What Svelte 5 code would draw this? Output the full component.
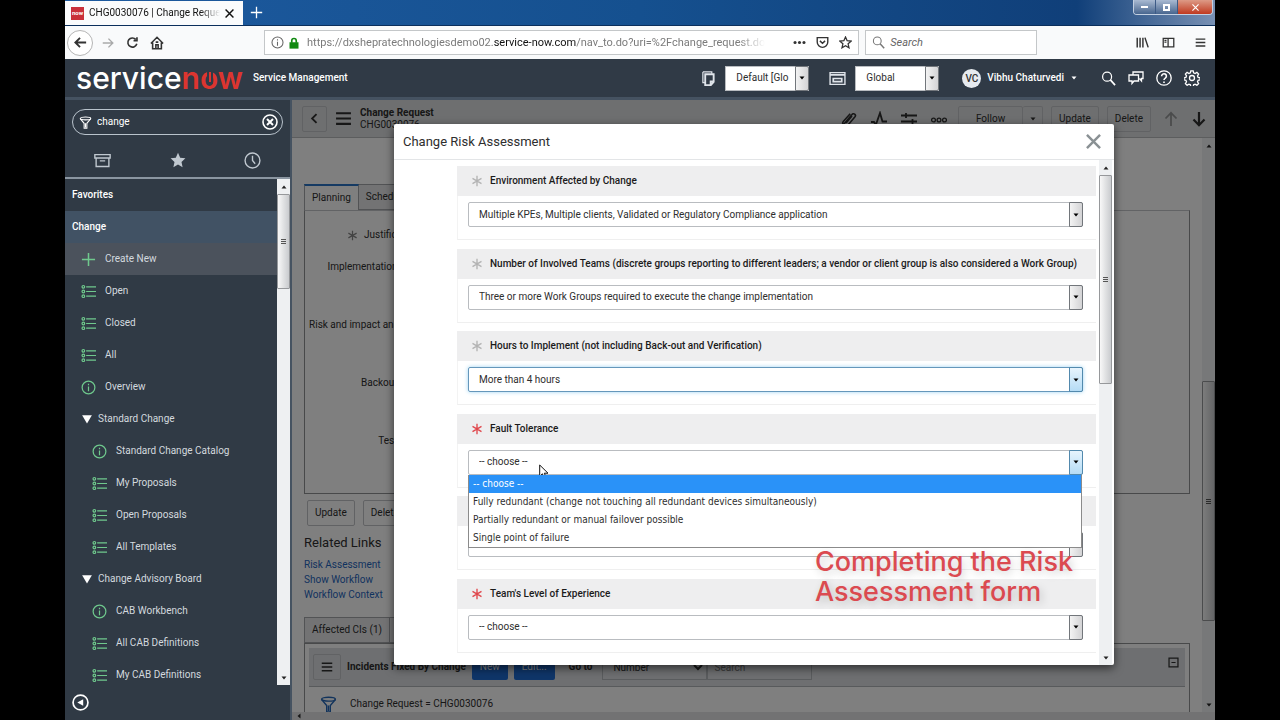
<script lang="ts">
	type Question = {
		id: string;
		label: string;
		value: string;
		required?: boolean;
		focused?: boolean;
		open?: boolean;
	};

	type NavItem = { label: string; icon: string; level: string };

	const questions: Question[] = [
		{
			id: 'environment',
			label: 'Environment Affected by Change',
			value: 'Multiple KPEs, Multiple clients, Validated or Regulatory Compliance application'
		},
		{
			id: 'teams',
			label:
				'Number of Involved Teams (discrete groups reporting to different leaders; a vendor or client group is also considered a Work Group)',
			value: 'Three or more Work Groups required to execute the change implementation'
		},
		{
			id: 'hours',
			label: 'Hours to Implement (not including Back-out and Verification)',
			value: 'More than 4 hours',
			focused: true
		},
		{ id: 'fault', label: 'Fault Tolerance', value: '-- choose --', required: true, open: true },
		{ id: 'next', label: '', value: '-- choose --', required: true },
		{ id: 'experience', label: "Team's Level of Experience", value: '-- choose --', required: true }
	];

	const faultOptions = [
		'-- choose --',
		'Fully redundant (change not touching all redundant devices simultaneously)',
		'Partially redundant or manual failover possible',
		'Single point of failure'
	];

	const nav: NavItem[] = [
		{ label: 'Favorites', icon: '', level: 'app' },
		{ label: 'Change', icon: '', level: 'app current' },
		{ label: 'Create New', icon: 'plus', level: 'module hovered' },
		{ label: 'Open', icon: 'list', level: 'module' },
		{ label: 'Closed', icon: 'list', level: 'module' },
		{ label: 'All', icon: 'list', level: 'module' },
		{ label: 'Overview', icon: 'info', level: 'module' },
		{ label: 'Standard Change', icon: 'triangle', level: 'group' },
		{ label: 'Standard Change Catalog', icon: 'info', level: 'nested' },
		{ label: 'My Proposals', icon: 'list', level: 'nested' },
		{ label: 'Open Proposals', icon: 'list', level: 'nested' },
		{ label: 'All Templates', icon: 'list', level: 'nested' },
		{ label: 'Change Advisory Board', icon: 'triangle', level: 'group' },
		{ label: 'CAB Workbench', icon: 'info', level: 'nested' },
		{ label: 'All CAB Definitions', icon: 'list', level: 'nested' },
		{ label: 'My CAB Definitions', icon: 'list', level: 'nested' }
	];

	const planFields = [
		{ label: 'Justification', starred: true },
		{ label: 'Implementation plan', starred: false },
		{ label: 'Risk and impact analysis', starred: false },
		{ label: 'Backout plan', starred: false },
		{ label: 'Test plan', starred: false }
	];
</script>

{#snippet icon(name: string, size = 16)}
	<svg class="icon" width={size} height={size} viewBox="0 0 16 16" aria-hidden="true">
		{#if name === 'plus'}
			<path d="M8 1v14M1 8h14" stroke-width="1.600" />
		{:else if name === 'list'}
			<path d="M5.5 3H16M5.5 8H16M5.5 13H16" />
			<circle cx="2.5" cy="3" r="1.4" />
			<circle cx="2.5" cy="8" r="1.4" />
			<circle cx="2.5" cy="13" r="1.4" />
		{:else if name === 'info'}
			<circle cx="8" cy="8" r="6.8" />
			<path d="M8 7v5M8 4v1.6" />
		{:else if name === 'triangle'}
			<path class="solid" d="M1.500 3h13L8 14z" />
		{:else if name === 'caret'}
			<path class="solid" d="M3 5h10L8 11z" />
		{:else if name === 'caret-up'}
			<path class="solid" d="M3 11h10L8 5z" />
		{:else if name === 'caret-left'}
			<path class="solid" d="M11 3v10L5 8z" />
		{:else if name === 'funnel'}
			<ellipse cx="8" cy="3" rx="6.500" ry="1.800" />
			<path d="M1.500 3.300 6.300 9v6h3.400V9l4.800-5.700M8 9v5" />
		{:else if name === 'clear'}
			<circle cx="8" cy="8" r="7" stroke-width="1.600" />
			<path d="m5 5 6 6m0-6-6 6" stroke-width="2" />
		{:else if name === 'archive'}
			<path d="M.8 2.500h14.400v3.200H.8zM2 5.700v8h12v-8M5.500 8.300h5" />
		{:else if name === 'star'}
			<path class="solid" d="m8 .8 2.200 4.900 5.200.6-3.900 3.600 1.100 5.300L8 12.500l-4.600 2.700 1.100-5.300L.6 6.300l5.200-.6z" />
		{:else if name === 'star-outline'}
			<path d="m8 1.300 2 4.500 4.900.5-3.700 3.300 1.100 4.900L8 12l-4.300 2.500 1.100-4.900L1.100 6.300 6 5.800z" stroke-width="1.600" />
		{:else if name === 'clock'}
			<circle cx="8" cy="8" r="7" />
			<path d="M8 3.500V8l2.500 3" />
		{:else if name === 'collapse'}
			<circle cx="8" cy="8" r="7" stroke-width="1.600" />
			<path class="solid" d="M10.500 5v6L5 8z" />
		{:else if name === 'back'}
			<path d="M14 8H2.500m5-5-5 5 5 5" stroke-width="2" />
		{:else if name === 'forward'}
			<path d="M2 8h11.500m-5-5 5 5-5 5" stroke-width="1.600" />
		{:else if name === 'reload'}
			<path d="M13.300 9.500A5.600 5.600 0 1 1 12 4.200M13.500 1.500v4.200H9.300" stroke-width="2" />
		{:else if name === 'home'}
			<path d="m1 8.500 7-7 7 7M3 7.500V14.500h10V7.500M6.700 14.500v-4.500h2.600v4.500M6.500 7h3" stroke-width="1.800" />
		{:else if name === 'lock'}
			<path class="solid" d="M2 7h12v8.500H2z" />
			<path d="M5 7.500V5a3 3 0 0 1 6 0v2.500" stroke-width="2.200" />
		{:else if name === 'dots'}
			<circle class="solid" cx="2.500" cy="8" r="1.900" />
			<circle class="solid" cx="8" cy="8" r="1.900" />
			<circle class="solid" cx="13.500" cy="8" r="1.900" />
		{:else if name === 'rings'}
			<circle cx="2.500" cy="9" r="1.900" />
			<circle cx="8" cy="9" r="1.900" />
			<circle cx="13.500" cy="9" r="1.900" />
		{:else if name === 'pocket'}
			<path d="M1.500 2h13v5.500a6.500 6.500 0 0 1-13 0zM4.800 6 8 9l3.200-3" stroke-width="1.700" />
		{:else if name === 'search'}
			<circle cx="6.500" cy="6" r="4.800" />
			<path d="m10 9.500 5 5.500" stroke-width="1.800" />
		{:else if name === 'library'}
			<path d="M1.500 2v12M5 2v12M8.500 2v12M11 2l4 12" stroke-width="1.800" />
		{:else if name === 'sidebar'}
			<path d="M1.500 3h13v10.500h-13zM7.500 3v10.500M3 5.500h2.500M3 7.500h2.500" stroke-width="1.600" />
		{:else if name === 'menu'}
			<path d="M1 3h14M1 8h14M1 13h14" stroke-width="2" />
		{:else if name === 'pages'}
			<path d="M2 1h9.500v2M2 1v11.500h2.500" />
			<path d="M4.500 3.500h9v8L10.500 15h-6zM13.500 11h-3.200v3.800" stroke-width="2" />
		{:else if name === 'window'}
			<path d="M1 2.500h14v11H1z" />
			<path d="M1 4.500h14M4 8h8v3H4z" stroke-width="1.600" />
		{:else if name === 'chat'}
			<path d="M5 4.500V2h10v6.500h-1.500V11L11.500 8.500M1 5h9.500v6H6l-2 2.500V11H1z" />
		{:else if name === 'help'}
			<circle cx="8" cy="8" r="7.200" />
			<path d="M5.600 6.200a2.400 2.400 0 1 1 3.700 2c-.9.6-1.300.9-1.300 1.900M8 11.500v1.500" stroke-width="1.600" />
		{:else if name === 'gear'}
			<path
				d="M6.800.8h2.400l.4 2 1.500.7 1.800-1.100 1.700 1.700-1.100 1.700.6 1.600 2 .4v2l-2 .5-.6 1.500 1.100 1.800-1.700 1.700-1.800-1.100-1.500.6-.4 2H6.800l-.4-2-1.500-.6-1.800 1.100-1.700-1.700 1.100-1.800-.6-1.500-1.900-.5v-2l1.900-.4.6-1.600-1.100-1.700 1.700-1.700 1.800 1.100 1.500-.7z"
			/>
			<circle cx="8" cy="8" r="2.500" />
		{:else if name === 'chevron'}
			<path d="M10.500 2.500 5 8l5.500 5.500" stroke-width="2.200" />
		{:else if name === 'clip'}
			<path d="m3 13 8-9.500a1.800 1.800 0 0 1 3 2.300L7 14a2.900 2.900 0 0 1-4.500-3.700l6.700-7.500M5 12l6-7" stroke-width="1.600" />
		{:else if name === 'activity'}
			<path d="M0 11h3l1.800 3L9 2l2.500 8.500H16" stroke-width="1.800" />
		{:else if name === 'sliders'}
			<path d="M0 4.500h16M0 10.500h16M5 2v5M11.500 8v5" stroke-width="1.800" />
		{:else if name === 'up'}
			<path d="M8 15V2M2.500 7.500 8 1.800l5.500 5.700" stroke-width="1.800" />
		{:else if name === 'down'}
			<path d="M8 1v13M2.500 8.500 8 14.200l5.500-5.700" stroke-width="2.200" />
		{:else if name === 'close'}
			<path d="m1 1 14 14M15 1 1 15" stroke-width="2.600" />
		{:else if name === 'asterisk'}
			<path d="M8 1v14M2 4.500l12 7M14 4.500l-12 7" stroke-width="1.800" />
		{:else if name === 'minus-box'}
			<path d="M1.500 1.500h13v13h-13zM5 8h6" stroke-width="1.800" />
		{/if}
	</svg>
{/snippet}

{#snippet scrollbar(offset: number, length: number)}
	<div class="scrollbar" aria-hidden="true">
		<span class="scroll-arrow">{@render icon('caret-up', 8)}</span>
		<div class="track">
			<div style="height: {offset}%"></div>
			<div class="thumb" style="height: {length}%"><i></i></div>
		</div>
		<span class="scroll-arrow">{@render icon('caret', 8)}</span>
	</div>
{/snippet}

<div class="stage">
	<div class="browser">
		<div class="titlebar">
			<div class="tab">
				<span class="favicon">now</span>
				<span class="tab-title">CHG0030076 | Change Request</span>
				<button class="plain" aria-label="Close tab">{@render icon('close', 9)}</button>
			</div>
			<button class="plain new-tab" aria-label="New tab">{@render icon('plus', 13)}</button>
			<div class="window-buttons">
				<button aria-label="Minimize"><i class="min"></i></button>
				<button aria-label="Restore"><i class="max"></i></button>
				<button class="quit" aria-label="Close window">{@render icon('close', 7)}</button>
			</div>
		</div>

		<div class="toolbar">
			<button class="plain round" aria-label="Back">{@render icon('back', 15)}</button>
			<button class="plain faded" aria-label="Forward">{@render icon('forward', 14)}</button>
			<button class="plain" aria-label="Reload">{@render icon('reload', 13)}</button>
			<button class="plain" aria-label="Home">{@render icon('home', 14)}</button>
			<div class="address">
				<span class="muted">{@render icon('info', 13)}</span>
				<span class="secure">{@render icon('lock', 12)}</span>
				<span class="url"
					>https://dxshepratechnologiesdemo02.<b>service-now.com</b
					>/nav_to.do?uri=%2Fchange_request.do</span
				>
				{@render icon('dots', 13)}
				{@render icon('pocket', 13)}
				{@render icon('star-outline', 13)}
			</div>
			<label class="web-search">
				{@render icon('search', 13)}
				<input type="text" placeholder="Search" aria-label="Search the web" />
			</label>
			<div class="toolbar-end">
				{@render icon('library', 13)}
				{@render icon('sidebar', 13)}
				{@render icon('menu', 11)}
			</div>
		</div>

		<header class="banner">
			<a class="logo" href="#home">service<b>n<span class="power">o</span>w</b></a>
			<span class="product">Service Management</span>
			<div class="pickers">
				{@render icon('pages', 15)}
				<span class="picker">
					<select aria-label="Update set"><option>Default [Glo</option></select>
					<span class="drop">{@render icon('caret', 8)}</span>
				</span>
				{@render icon('window', 17)}
				<span class="picker">
					<select aria-label="Application scope"><option>Global</option></select>
					<span class="drop">{@render icon('caret', 8)}</span>
				</span>
			</div>
			<button class="plain user">
				<span class="avatar">VC</span>
				Vibhu Chaturvedi
				{@render icon('caret', 8)}
			</button>
			<div class="tools">
				<button class="plain" aria-label="Find">{@render icon('search', 15)}</button>
				<button class="plain" aria-label="Connect">{@render icon('chat', 16)}</button>
				<button class="plain" aria-label="Help">{@render icon('help', 16)}</button>
				<button class="plain" aria-label="Settings">{@render icon('gear', 16)}</button>
			</div>
		</header>

		<div class="workspace">
			<aside class="sidebar">
				<label class="filter">
					{@render icon('funnel', 13)}
					<input type="text" value="change" aria-label="Filter navigator" />
					{@render icon('clear', 16)}
				</label>
				<div class="nav-tabs">
					<button class="plain" aria-label="All applications">{@render icon('archive', 17)}</button>
					<button class="plain" aria-label="Favorites">{@render icon('star', 16)}</button>
					<button class="plain" aria-label="History">{@render icon('clock', 17)}</button>
				</div>
				<div class="nav-body">
					<nav>
						{#each nav as item}
							<a class={item.level} href="#nav">
								{#if item.icon}{@render icon(item.icon, item.icon === 'triangle' ? 12 : 15)}{/if}
								{item.label}
							</a>
						{/each}
					</nav>
					{@render scrollbar(0, 20)}
				</div>
				<div class="nav-foot">
					<button class="plain" aria-label="Collapse navigator">{@render icon('collapse', 17)}</button>
				</div>
			</aside>

			<main class="content">
				<div class="form-head">
					<button class="box back" aria-label="Back to list">{@render icon('chevron', 13)}</button>
					<button class="plain" aria-label="Form menu">{@render icon('menu', 17)}</button>
					<div class="record">
						<strong>Change Request</strong>
						<span>CHG0030076</span>
					</div>
					<div class="form-icons">
						{@render icon('clip', 16)}
						{@render icon('activity', 16)}
						{@render icon('sliders', 16)}
						{@render icon('rings', 16)}
					</div>
					<div class="split">
						<button class="box follow">Follow</button>
						<button class="box more" aria-label="Follow options">{@render icon('caret', 8)}</button>
					</div>
					<button class="box">Update</button>
					<button class="box">Delete</button>
					<div class="steps">
						<span class="faded">{@render icon('up', 16)}</span>
						{@render icon('down', 16)}
					</div>
				</div>

				<div class="form-scroll">
					<div class="form">
						<div class="form-tabs">
							<button class="form-tab active">Planning</button>
							<button class="form-tab">Schedule</button>
						</div>
						<div class="panel">
							{#each planFields as field}
								<div class="plan-row" class:short={field.starred}>
									<span class="plan-label">
										{#if field.starred}{@render icon('asterisk', 11)}{/if}
										{field.label}
									</span>
								</div>
							{/each}
						</div>
						<div class="form-actions">
							<button class="box">Update</button>
							<button class="box">Delete</button>
						</div>
						<h2>Related Links</h2>
						<div class="links">
							<a href="#risk">Risk Assessment</a>
							<a href="#workflow">Show Workflow</a>
							<a href="#context">Workflow Context</a>
						</div>
						<div class="list-tabs">
							<button class="list-tab">Affected CIs (1)</button>
							<button class="list-tab">Impacted Services</button>
						</div>
						<div class="list">
							<div class="list-head">
								<button class="box" aria-label="List menu">{@render icon('menu', 12)}</button>
								<strong>Incidents Fixed By Change</strong>
								<button class="primary">New</button>
								<button class="primary">Edit...</button>
								<strong class="goto">Go to</strong>
								<span class="goto-fields">
									<select aria-label="Go to field"><option>Number</option></select>
									<input type="text" placeholder="Search" aria-label="Search list" />
								</span>
								<span class="collapse">{@render icon('minus-box', 11)}</span>
							</div>
							<div class="list-filter">
								<span class="blue">{@render icon('funnel', 17)}</span>
								Change Request = CHG0030076
							</div>
						</div>
					</div>
					{@render scrollbar(42, 44)}
				</div>
				<div class="bottom-bar">
					{@render icon('caret-left', 8)}
				</div>

				<div class="overlay">
					<div class="dialog" role="dialog" aria-labelledby="dialog-title">
						<div class="dialog-head">
							<h1 id="dialog-title">Change Risk Assessment</h1>
							<button class="plain" aria-label="Close">{@render icon('close', 15)}</button>
						</div>
						<div class="dialog-body">
							<form class="questions">
								{#each questions as q}
									<section>
										<div class="question-head" class:required={q.required}>
											{@render icon('asterisk', 12)}
											<label for={q.id}>{q.label}</label>
										</div>
										<div class="question-body">
											<span class="choice" class:focused={q.focused} class:open={q.open}>
												<select id={q.id} aria-label={q.label || q.value}>
													<option>{q.value}</option>
												</select>
												<span class="drop">{@render icon('caret', 8)}</span>
												{#if q.open}
													<ul class="options" role="listbox">
														{#each faultOptions as option, i}
															<li role="option" aria-selected={i === 0}>{option}</li>
														{/each}
													</ul>
												{/if}
											</span>
										</div>
									</section>
								{/each}
							</form>
							{@render scrollbar(0, 44)}
						</div>
					</div>
					<svg class="cursor" width="10" height="16" viewBox="0 0 10 16" aria-hidden="true">
						<path d="M.7 1v11.300l2.700-2.500 1.900 4.500 1.900-.8-1.900-4.300H9z" fill="#fff" stroke="#111" />
					</svg>
					<p class="caption">Completing the Risk<br />Assessment form</p>
				</div>
			</main>
		</div>
	</div>
</div>

<style>
	:global(body) {
		background: #000;
	}

	.stage {
		box-sizing: border-box;
		height: 100vh;
		padding: 0 65px;
		overflow: hidden;
		font-family: Roboto, sans-serif;
		font-size: 10px;
		line-height: 16px;
		color: #2e2e2e;
	}

	.stage :where(button, input, select) {
		box-sizing: border-box;
		margin: 0;
		font: inherit;
		color: inherit;
	}

	a {
		color: inherit;
		text-decoration: none;
	}

	.icon {
		flex: none;
		display: block;
		fill: none;
		stroke: currentColor;
		stroke-width: 1.3;
	}

	.icon .solid {
		fill: currentColor;
		stroke: none;
	}

	.plain {
		display: flex;
		align-items: center;
		padding: 0;
		border: 0;
		background: none;
	}

	.faded {
		opacity: 0.4;
	}

	.browser {
		display: flex;
		flex-direction: column;
		height: 100%;
	}

	/* browser chrome */
	.titlebar {
		display: flex;
		align-items: flex-end;
		height: 26px;
		background: linear-gradient(90deg, #1d5a9f 0%, #15508f 50%, #103f79 88%, #7890b3 100%);
		border-bottom: 1px solid #0b2f5c;
		box-sizing: border-box;
	}

	.tab {
		display: flex;
		align-items: center;
		gap: 5px;
		width: 178px;
		height: 24px;
		padding: 0 9px 0 6px;
		box-sizing: border-box;
		background: #fafbfc;
		color: #111;
	}

	.favicon {
		width: 13px;
		height: 13px;
		background: #c9303a;
		color: #fff;
		font-size: 6px;
		font-weight: 700;
		line-height: 12px;
		text-align: center;
	}

	.tab-title {
		flex: 1;
		overflow: hidden;
		white-space: nowrap;
		mask-image: linear-gradient(90deg, #000 85%, transparent);
	}

	.new-tab {
		height: 26px;
		margin-left: 7px;
		color: #fff;
	}

	.window-buttons {
		display: flex;
		align-self: flex-start;
		margin: 0 2px 0 auto;
		border: 1px solid #c3d0e2;
		border-top: 0;
		border-radius: 0 0 4px 4px;
		overflow: hidden;
	}

	.window-buttons button {
		display: grid;
		place-items: center;
		width: 22px;
		height: 14px;
		padding: 0;
		border: 0;
		border-right: 1px solid #3c5a86;
		background: linear-gradient(#a9bad2, #48668f);
		color: #fff;
	}

	.window-buttons .quit {
		width: 34px;
		border-right: 0;
		background: linear-gradient(#dd9a86, #c0391f);
	}

	.min {
		width: 7px;
		height: 2px;
		background: #fff;
	}

	.max {
		width: 3px;
		height: 3px;
		border: 2px solid #fff;
	}

	.toolbar {
		display: flex;
		align-items: center;
		height: 33px;
		background: #f9fafb;
		color: #333;
	}

	.toolbar > button {
		margin-right: 11px;
	}

	.toolbar .round {
		justify-content: center;
		width: 26px;
		height: 26px;
		margin: 0 8px 0 2px;
		border: 1px solid #b5b5b5;
		border-radius: 50%;
		background: #fff;
	}

	.address,
	.web-search {
		display: flex;
		align-items: center;
		gap: 5px;
		box-sizing: border-box;
		height: 25px;
		padding: 0 6px;
		border: 1px solid #c4c7c9;
		background: #fff;
		font-size: 11px;
	}

	.address {
		flex: 582;
		gap: 10px;
		min-width: 0;
		margin-left: 89px;
	}

	.address .secure {
		margin-left: -6px;
		color: #128a12;
	}

	.muted {
		color: #666;
	}

	.url {
		flex: 1;
		overflow: hidden;
		white-space: nowrap;
		margin: 0 18px 0 -3px;
		color: #7b7b7b;
		mask-image: linear-gradient(90deg, #000 94%, transparent);
	}

	.url b {
		font-weight: 400;
		color: #111;
	}

	.web-search {
		flex: 158;
		margin-left: 6px;
		min-width: 0;
		color: #777;
	}

	.web-search input {
		width: 100%;
		padding: 0;
		border: 0;
		font-style: italic;
	}

	.web-search input::placeholder {
		color: #666;
	}

	.toolbar-end {
		display: flex;
		align-items: center;
		gap: 13px;
		margin-left: 99px;
		padding-right: 9px;
	}

	.toolbar-end .icon:last-child {
		margin-left: 7px;
	}

	/* banner */
	.banner {
		display: flex;
		align-items: center;
		box-sizing: border-box;
		height: 41px;
		padding: 0 15px 0 11px;
		border-bottom: 3px solid #455261;
		background: #303a46;
		color: #fff;
		font-weight: 500;
	}

	.logo {
		font-family: Inter, sans-serif;
		font-size: 30px;
		font-weight: 500;
		line-height: 32px;
	}

	.logo b {
		font-weight: 600;
		color: #dc3530;
	}

	.power {
		position: relative;
	}

	.power::before {
		content: '';
		position: absolute;
		top: 12px;
		left: 7px;
		width: 2px;
		height: 10px;
		border: 2px solid #303a46;
		border-top: 0;
		background: #dc3530;
	}

	.product {
		margin-left: 10px;
	}

	.pickers {
		display: flex;
		align-items: center;
		gap: 9px;
		margin-left: auto;
		color: #dfe4ea;
	}

	.pickers .picker + .icon {
		margin-left: 11px;
	}

	.picker,
	.choice {
		display: flex;
		box-sizing: border-box;
		height: 25px;
		border: 1px solid #b9bcc0;
		background: #fff;
		color: #2e2e2e;
		font-weight: 400;
	}

	.picker {
		width: 84px;
	}

	.picker select,
	.choice select {
		flex: 1;
		min-width: 0;
		padding: 0 0 0 10px;
		border: 0;
		background: none;
		appearance: none;
		outline: 0;
		line-height: 20px;
	}

	.drop {
		display: grid;
		place-items: center;
		box-sizing: border-box;
		width: 14px;
		margin: -1px;
		border: 1px solid #72767b;
		border-radius: 0 2px 2px 0;
		background: linear-gradient(90deg, #f3f3f3, #d3d3d5);
		color: #000;
	}

	.user {
		gap: 6px;
		margin-left: 23px;
	}

	.avatar {
		width: 19px;
		height: 19px;
		border-radius: 50%;
		background: #e6eaef;
		color: #333;
		line-height: 19px;
		text-align: center;
	}

	.tools {
		display: flex;
		gap: 12px;
		margin-left: 23px;
	}

	.workspace {
		flex: 1;
		display: flex;
		min-height: 0;
	}

	/* navigator */
	.sidebar {
		display: flex;
		flex-direction: column;
		width: 227px;
		box-sizing: border-box;
		border-right: 2px solid #465361;
		background: #303a45;
		color: #d3d9df;
	}

	.filter {
		display: flex;
		align-items: center;
		gap: 5px;
		height: 24px;
		margin: 9px 7px 0;
		padding: 0 4px 0 6px;
		border: 1px solid #b9c3cc;
		border-radius: 13px;
		color: #fff;
	}

	.filter input {
		flex: 1;
		min-width: 0;
		padding: 0;
		border: 0;
		background: none;
	}

	.nav-tabs {
		display: grid;
		grid-template-columns: 1fr 1fr 1fr;
		height: 34px;
		padding-top: 8px;
		border-bottom: 2px solid #8b96a1;
		color: #c0c8d0;
	}

	.nav-tabs button {
		justify-content: center;
	}

	.nav-body {
		flex: 1;
		display: flex;
		min-height: 0;
	}

	nav {
		flex: 1;
		overflow: hidden;
	}

	nav a {
		display: flex;
		align-items: center;
		gap: 9px;
		height: 32px;
	}

	nav a .icon {
		color: #6fc98d;
	}

	.app {
		padding-left: 7px;
		color: #fff;
		font-weight: 500;
	}

	.current {
		background: #415264;
	}

	.hovered {
		background: #4b525c;
	}

	.module {
		padding-left: 16px;
	}

	.group {
		padding-left: 16px;
		gap: 5px;
	}

	nav .group .icon {
		color: #fff;
	}

	.nested {
		padding-left: 27px;
	}

	.nav-foot {
		display: flex;
		align-items: center;
		height: 35px;
		padding-left: 7px;
		color: #fff;
	}

	/* classic scroll bars */
	.scrollbar {
		display: flex;
		flex-direction: column;
		width: 13px;
		background: #eef0f2;
		color: #222;
	}

	.scroll-arrow {
		display: grid;
		place-items: center;
		height: 15px;
	}

	.track {
		flex: 1;
		min-height: 0;
	}

	.thumb {
		display: grid;
		place-items: center;
		box-sizing: border-box;
		border: 1px solid #96989b;
		border-radius: 1px;
		background: linear-gradient(90deg, #f8f8f8, #c9cbce);
	}

	.thumb i {
		width: 5px;
		height: 5px;
		background: repeating-linear-gradient(#555 0 1px, transparent 1px 2px);
	}

	/* change request form */
	.content {
		flex: 1;
		position: relative;
		display: flex;
		flex-direction: column;
		min-width: 0;
		overflow: hidden;
		background: #fff;
	}

	.box {
		display: grid;
		place-items: center;
		height: 26px;
		padding: 0 7px;
		border: 1px solid #c3c5c8;
		border-radius: 2px;
		background: none;
	}

	.form-head {
		display: flex;
		align-items: center;
		gap: 8px;
		box-sizing: border-box;
		height: 38px;
		padding: 0 8px 0 10px;
		border-bottom: 1px solid #b8babd;
		background: #dcdee0;
	}

	.form-head .back {
		width: 25px;
		padding: 0;
	}

	.record {
		display: flex;
		flex-direction: column;
		line-height: 12px;
	}

	.form-icons {
		display: flex;
		gap: 14px;
		margin: 0 3px 0 auto;
	}

	.split {
		display: flex;
	}

	.follow {
		width: 65px;
	}

	.more {
		width: 20px;
		padding: 0;
		border-left: 0;
	}

	.steps {
		display: flex;
		gap: 12px;
		margin-left: 4px;
	}

	.form-scroll {
		flex: 1;
		display: flex;
		min-height: 0;
	}

	.form {
		flex: 1;
		min-width: 0;
		padding: 46px 12px 0 12px;
		overflow: hidden;
	}

	.form-tabs,
	.list-tabs {
		display: flex;
	}

	.form-tab,
	.list-tab {
		height: 26px;
		padding: 0 7px;
		border: 1px solid #a5a7aa;
		border-left: 0;
		background: #e6e7e9;
	}

	.form-tab.active {
		border: 0;
		border-top: 2px solid #2b74c6;
		border-left: 1px solid #a5a7aa;
		border-right: 1px solid #a5a7aa;
		background: none;
	}

	.panel {
		padding: 8px 0 10px;
		border: 1px solid #909295;
		border-top-color: #c5c7ca;
	}

	.plan-row {
		height: 58px;
		line-height: 32px;
	}

	.plan-row.short {
		height: 32px;
	}

	.plan-label {
		display: flex;
		justify-content: flex-end;
		align-items: center;
		gap: 6px;
		width: 114px;
		white-space: nowrap;
	}

	.plan-label .icon {
		color: #888;
	}

	.form-actions {
		display: flex;
		gap: 8px;
		padding: 6px 3px 8px;
	}

	h2 {
		margin: 0 0 6px;
		font-size: 13px;
		font-weight: 400;
		line-height: 17px;
	}

	.links {
		display: flex;
		flex-direction: column;
		align-items: flex-start;
		line-height: 15px;
		color: #1f66c0;
	}

	.list-tabs {
		margin-top: 15px;
	}

	.list-tab:first-child {
		border-left: 1px solid #a5a7aa;
	}

	.list {
		height: 90px;
		padding: 4px 4px 0;
		border: 1px solid #909295;
	}

	.list-head {
		display: flex;
		align-items: center;
		gap: 6px;
		height: 38px;
		padding: 0 4px;
		border-bottom: 1px solid #b0b4b8;
		background: #dcdfe2;
	}

	.primary {
		height: 26px;
		padding: 0 8px;
		border: 0;
		border-radius: 2px;
		background: #1f6bd0;
		color: #fff;
	}

	.goto {
		margin: 0 4px 0 8px;
	}

	.goto-fields {
		display: flex;
	}

	.goto-fields > * {
		width: 105px;
		height: 25px;
		padding: 0 6px;
		border: 1px solid #b5b8bc;
		background: none;
	}

	.collapse {
		align-self: flex-start;
		margin: 9px 2px 0 auto;
	}

	.list-filter {
		display: flex;
		align-items: center;
		gap: 13px;
		height: 34px;
		padding-left: 11px;
	}

	.blue {
		color: #2467b8;
	}

	.bottom-bar {
		display: flex;
		align-items: center;
		height: 8px;
		padding-left: 3px;
		background: #e4e5e6;
	}

	/* dialog */
	.overlay {
		position: absolute;
		inset: 0;
		display: flex;
		padding: 24px 101px 55px 102px;
		background: rgba(0, 0, 0, 0.5);
	}

	.dialog {
		flex: 1;
		display: flex;
		flex-direction: column;
		min-width: 0;
		border-radius: 2px;
		background: #fff;
		box-shadow: 0 3px 10px rgba(0, 0, 0, 0.6);
	}

	.dialog-head {
		display: flex;
		align-items: center;
		justify-content: space-between;
		height: 35px;
		padding: 0 13px 0 9px;
		border-bottom: 1px solid #e3e5e7;
	}

	.dialog-head button {
		color: #8a9194;
	}

	h1 {
		margin: 0;
		font-size: 13px;
		font-weight: 400;
		line-height: 20px;
	}

	.dialog-body {
		flex: 1;
		display: flex;
		gap: 3px;
		min-height: 0;
		padding-right: 2px;
	}

	.questions {
		flex: 1;
		display: grid;
		grid-template-columns: minmax(0, 1fr);
		grid-auto-rows: minmax(82px, 1fr);
		min-width: 0;
		padding: 6px 0 4px 63px;
	}

	.question-head {
		display: flex;
		align-items: center;
		gap: 7px;
		height: 30px;
		padding-left: 14px;
		background: #eeeeef;
		color: #b3b3b3;
	}

	.question-head.required {
		color: #e0474c;
	}

	.question-head label {
		color: #1b1b1b;
		font-weight: 500;
		white-space: nowrap;
	}

	.question-body {
		height: 37px;
		padding: 6px 13px 0 10px;
		border-left: 1px solid #f3f3f3;
		border-bottom: 1px solid #efefef;
	}

	.choice {
		position: relative;
		border-radius: 2px;
	}

	.choice.focused {
		border-color: #6597bb;
		box-shadow: 0 0 4px #9fd4f2;
	}

	.focused .drop,
	.open .drop {
		border-color: #5289ad;
		background: linear-gradient(#e7f4fd, #b5dcf5);
	}

	.options {
		position: absolute;
		z-index: 1;
		top: 24px;
		left: -1px;
		right: 0;
		margin: 0;
		padding: 0;
		border: 1px solid #8b8b8b;
		border-top: 0;
		background: #fff;
		list-style: none;
		font-family: 'DejaVu Sans Condensed', 'DejaVu Sans', sans-serif;
		line-height: 18px;
	}

	.options li {
		padding-left: 4px;
	}

	.options li[aria-selected='true'] {
		background: #2a92f8;
		color: #fff;
	}

	.cursor {
		position: absolute;
		top: 364px;
		left: 247px;
	}

	.caption {
		position: absolute;
		top: 447px;
		left: 523px;
		margin: 0;
		font-family: Inter, sans-serif;
		font-size: 27px;
		font-weight: 500;
		line-height: 30px;
		white-space: nowrap;
		color: #db4a50;
		text-shadow: 2px 3px 8px rgba(0, 0, 0, 0.2);
		z-index: 2;
	}
</style>
